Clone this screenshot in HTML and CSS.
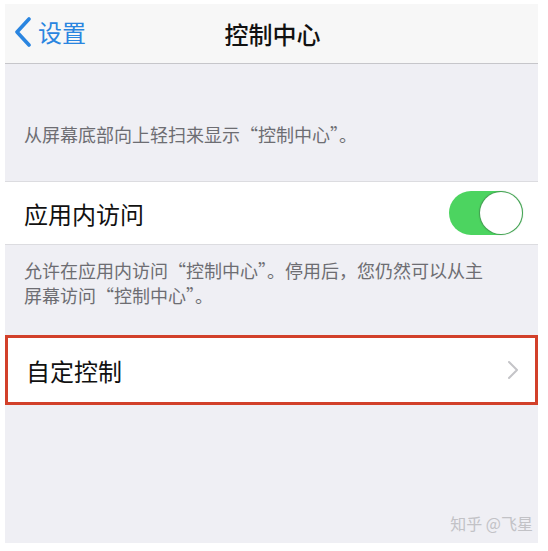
FILE: index.html
```html
<!DOCTYPE html>
<html lang="zh">
<head>
<meta charset="utf-8">
<link rel="stylesheet" href="styles.css">
</head>
<body>
<div class="screen">
  <header class="nav">
    <div class="back">
      <svg class="chev" width="18" height="30" viewBox="0 0 18 30"><path d="M15 2 L3 15 L15 28" fill="none" stroke="#2a85e0" stroke-width="3.6" stroke-linecap="round" stroke-linejoin="round"/></svg>
      <span>设置</span>
    </div>
    <div class="title">控制中心</div>
  </header>
  <p class="hint first">从屏幕底部向上轻扫来显示“控制中心”。</p>
  <div class="row">
    <span class="label">应用内访问</span>
    <div class="toggle"><div class="knob"></div></div>
  </div>
  <p class="hint second">允许在应用内访问“控制中心”。停用后，您仍然可以从主<br>屏幕访问“控制中心”。</p>
  <div class="row custom">
    <span class="label">自定控制</span>
    <svg class="arrow" width="12" height="20" viewBox="0 0 12 20"><path d="M2 2 L10 10 L2 18" fill="none" stroke="#c4c4c8" stroke-width="2" stroke-linecap="round" stroke-linejoin="round"/></svg>
  </div>
  <div class="spacer"></div>
  <div class="watermark">知乎 @飞星</div>
</div>
</body>
</html>
```
FILE: styles.css
```css
html, body {
  margin: 0;
  padding: 0;
  background: #ffffff;
}
body {
  font-family: "Noto Sans CJK SC", "Noto Sans", sans-serif;
}
.screen {
  margin: 4px 10px 0 5px;
  height: 539px;
  background: #efeff4;
  display: flex;
  flex-direction: column;
}
.nav {
  height: 59px;
  background: #f7f7f7;
  border-bottom: 1px solid #c6c6ca;
  display: flex;
  align-items: center;
  justify-content: center;
  position: relative;
  flex-shrink: 0;
}
.back {
  position: absolute;
  left: 9px;
  top: 12px;
  display: flex;
  align-items: center;
  gap: 6px;
  color: #2a85e0;
  font-size: 24px;
  line-height: 32px;
}
.title {
  font-size: 24px;
  font-weight: 500;
  color: #111;
  margin-left: 2px;
  line-height: 32px;
}
.hint {
  margin: 0;
  color: #6d6d72;
  font-size: 18px;
  line-height: 25px;
  padding-left: 19px;
}
.hint.first {
  padding-top: 58px;
  padding-bottom: 34px;
}
.hint.second {
  padding-top: 13px;
  padding-bottom: 27px;
}
.row {
  background: #ffffff;
  height: 62px;
  border-top: 1px solid #dcdce0;
  border-bottom: 1px solid #dcdce0;
  display: flex;
  align-items: center;
  justify-content: space-between;
  padding: 0 15px 0 19px;
  flex-shrink: 0;
}
.label {
  font-size: 24px;
  color: #111;
}
.toggle {
  width: 74px;
  height: 44px;
  border-radius: 22px;
  background: #4cd460;
  position: relative;
}
.knob {
  position: absolute;
  right: 1px;
  top: 1px;
  width: 42px;
  height: 42px;
  border-radius: 50%;
  background: #ffffff;
  box-shadow: 0 0 1px 1px rgba(60, 110, 70, 0.55);
}
.row.custom {
  height: 64px;
  border: 3px solid #d2402a;
  padding: 0 14px 0 18px;
}
.arrow {
  margin-right: 2px;
}
.spacer {
  flex: 1;
}
.watermark {
  align-self: flex-end;
  margin-right: 5px;
  margin-bottom: 10px;
  font-size: 16px;
  color: #c2c2c6;
  line-height: 20px;
}
```
